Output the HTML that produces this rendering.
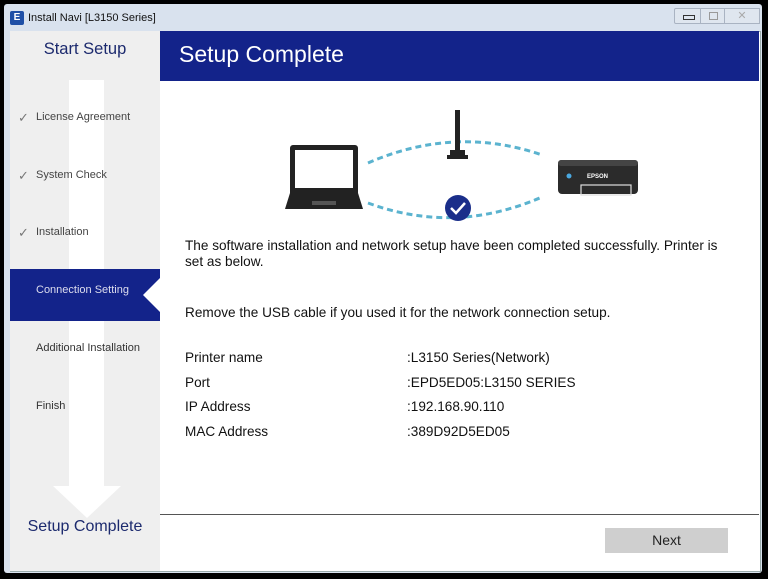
<html><head><style>
body{margin:0;width:768px;height:579px;background:#000;position:relative;overflow:hidden;font-family:"Liberation Sans",sans-serif}
.a{position:absolute}
.t{font-size:13.6px;color:#111}
.s{font-size:11px;color:#444}
.ck{position:absolute;left:18px;top:0;font-size:13px;color:#777}
</style></head><body>
<div class="a" style="left:4px;top:4px;width:758px;height:569px;background:#d9e2ee;border-radius:3px"></div>
<div class="a" style="left:10px;top:11px;width:14px;height:14px;background:#1f4fa6;border-radius:2px;color:#fff;font-size:10px;font-weight:bold;text-align:center;line-height:14px">E</div>
<div class="a" style="left:28px;top:12px;font-size:11px;color:#111">Install Navi [L3150 Series]</div>
<div class="a" style="left:674px;top:8px;width:26px;height:14px;border:1px solid #a9b3c2;border-radius:2px 0 0 2px;background:#dfe6ef"><div class="a" style="left:8px;top:6px;width:10px;height:3px;border:1px solid #333"></div></div>
<div class="a" style="left:700px;top:8px;width:24px;height:14px;border:1px solid #a9b3c2;background:#dfe6ef"><div class="a" style="left:8px;top:3px;width:7px;height:6px;border:1px solid #999"></div></div>
<div class="a" style="left:724px;top:8px;width:34px;height:14px;border:1px solid #a9b3c2;background:#dfe6ef;color:#aaa;font-size:11px;text-align:center;line-height:14px">✕</div>
<div class="a" style="left:10px;top:31px;width:749px;height:539px;background:#fff;border:1px solid #9aa"></div>
<div class="a" style="left:10px;top:31px;width:150px;height:540px;background:#efefef"></div>
<div class="a" style="left:69px;top:80px;width:35px;height:406px;background:#fff"></div>
<div class="a" style="left:53px;top:486px;width:0;height:0;border-left:34px solid transparent;border-right:34px solid transparent;border-top:32px solid #fff"></div>
<div class="a" style="left:10px;top:40px;width:150px;text-align:center;font-size:16.5px;color:#1c2a6e">Start Setup</div>
<div class="a" style="left:10px;top:518px;width:150px;text-align:center;font-size:16px;color:#1c2a6e">Setup Complete</div>
<div class="a" style="left:0;top:110px;width:160px;height:20px"><span class="ck">✓</span><span class="a s" style="left:36px;top:1px">License Agreement</span></div>
<div class="a" style="left:0;top:168px;width:160px;height:20px"><span class="ck">✓</span><span class="a s" style="left:36px;top:1px">System Check</span></div>
<div class="a" style="left:0;top:225px;width:160px;height:20px"><span class="ck">✓</span><span class="a s" style="left:36px;top:1px">Installation</span></div>
<div class="a" style="left:10px;top:269px;width:150px;height:52px;background:#13238a"></div>
<div class="a" style="left:143px;top:278px;width:0;height:0;border-top:17px solid transparent;border-bottom:17px solid transparent;border-right:17px solid #fff"></div>
<div class="a" style="left:36px;top:284px;font-size:11px;color:#dde">Connection Setting</div>
<div class="a" style="left:36px;top:342px;font-size:11px;color:#333">Additional Installation</div>
<div class="a" style="left:36px;top:400px;font-size:11px;color:#333">Finish</div>
<div class="a" style="left:160px;top:31px;width:599px;height:50px;background:#13238a"></div>
<div class="a" style="left:179px;top:41px;font-size:23px;color:#fff">Setup Complete</div>
<svg class="a" style="left:280px;top:105px" width="370" height="120">
<path d="M88 58 Q175 20 262 50" fill="none" stroke="#5bb3cf" stroke-width="3" stroke-dasharray="6 4"/>
<path d="M88 98 Q175 130 262 92" fill="none" stroke="#5bb3cf" stroke-width="3" stroke-dasharray="6 4"/>
<rect x="10" y="40" width="68" height="52" rx="3" fill="#222"/><rect x="15" y="45" width="58" height="38" fill="#fff"/>
<path d="M10 88 H78 L83 104 H5 Z" fill="#222"/><rect x="32" y="96" width="24" height="4" fill="#555"/>
<rect x="175" y="5" width="5" height="42" fill="#222"/><rect x="170" y="45" width="15" height="8" fill="#222"/><rect x="167" y="50" width="21" height="4" fill="#222"/>
<rect x="278" y="55" width="80" height="34" rx="4" fill="#2b2b2b"/><rect x="278" y="55" width="80" height="6" rx="3" fill="#444"/><circle cx="289" cy="71" r="2.5" fill="#4aa8e0"/>
<text x="307" y="73" font-size="6" fill="#fff" font-family="Liberation Sans" font-weight="bold">EPSON</text>
<rect x="301" y="80" width="50" height="10" fill="none" stroke="#ddd" stroke-width="1.2"/>
<circle cx="178" cy="103" r="13" fill="#1a2e8a"/><path d="M171 103 L176 108 L185 98" fill="none" stroke="#fff" stroke-width="2.5"/>
</svg>
<div class="a t" style="left:185px;top:238px;width:545px;line-height:16px">The software installation and network setup have been completed successfully. Printer is set as below.</div>
<div class="a t" style="left:185px;top:305px">Remove the USB cable if you used it for the network connection setup.</div>
<div class="a t" style="left:185px;top:346px;line-height:24.7px">Printer name<br>Port<br>IP Address<br>MAC Address</div>
<div class="a t" style="left:407px;top:346px;line-height:24.7px">:L3150 Series(Network)<br>:EPD5ED05:L3150 SERIES<br>:192.168.90.110<br>:389D92D5ED05</div>
<div class="a" style="left:160px;top:514px;width:599px;height:1px;background:#555"></div>
<div class="a" style="left:605px;top:528px;width:123px;height:25px;background:#cfcfcf;text-align:center;line-height:25px;font-size:14px;color:#222">Next</div>
</body></html>
